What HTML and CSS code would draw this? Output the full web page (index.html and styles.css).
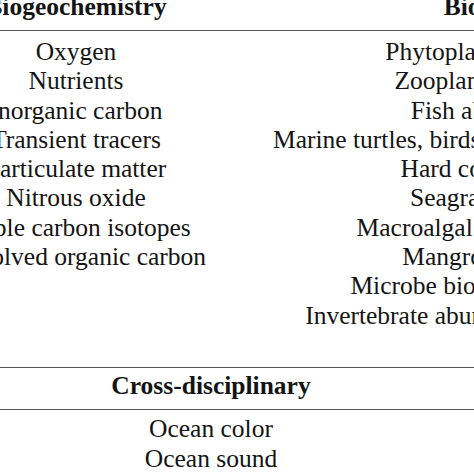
FILE: index.html
```html
<!DOCTYPE html>
<html>
<head>
<meta charset="utf-8">
<link rel="stylesheet" href="styles.css">
</head>
<body>
<div class="table">
  <div class="cols head">
    <div class="cell">Physics</div>
    <div class="cell">Biogeochemistry</div>
    <div class="cell">Biology and Ecosystems</div>
  </div>
  <div class="rule"></div>
  <div class="cols body">
    <div class="col">
      <div>Sea state</div>
      <div>Ocean surface stress</div>
      <div>Sea ice</div>
      <div>Sea surface height</div>
      <div>Sea surface temperature</div>
      <div>Subsurface temperature</div>
      <div>Surface currents</div>
      <div>Subsurface currents</div>
      <div>Sea surface salinity</div>
      <div>Subsurface salinity</div>
      <div>Ocean surface heat flux</div>
    </div>
    <div class="col">
      <div>Oxygen</div>
      <div>Nutrients</div>
      <div>Inorganic carbon</div>
      <div>Transient tracers</div>
      <div>Particulate matter</div>
      <div>Nitrous oxide</div>
      <div>Stable carbon isotopes</div>
      <div>Dissolved organic carbon</div>
    </div>
    <div class="col">
      <div>Phytoplankton biomass and diversity</div>
      <div>Zooplankton biomass and diversity</div>
      <div>Fish abundance and distribution</div>
      <div>Marine turtles, birds, mammals abundance and distribution</div>
      <div>Hard coral cover and composition</div>
      <div>Seagrass cover and composition</div>
      <div>Macroalgal canopy cover and composition</div>
      <div>Mangrove cover and composition</div>
      <div>Microbe biomass and diversity (*emerging)</div>
      <div>Invertebrate abundance and distribution (*emerging)</div>
    </div>
  </div>
  <div class="rule"></div>
  <div class="section-head">Cross-disciplinary</div>
  <div class="rule"></div>
  <div class="section-body">
    <div>Ocean color</div>
    <div>Ocean sound</div>
  </div>
</div>
</body>
</html>
```
FILE: styles.css
```css
html, body {
  margin: 0;
  padding: 0;
  background: #ffffff;
  overflow: hidden;
}
body {
  font-family: "Liberation Serif", "Times New Roman", serif;
  font-size: 25.5px;
  line-height: 29.3px;
  color: #141414;
}
.table {
  width: 1340px;
  margin: -8.3px 0 0 -459px;
}
.cols {
  display: grid;
  grid-template-columns: 344px 382px 614px;
  text-align: center;
  white-space: nowrap;
}
.head {
  font-weight: bold;
  padding-bottom: 9px;
}
.rule {
  height: 0;
  border-top: 1.5px solid #555555;
}
.body {
  padding-top: 6px;
  padding-bottom: 8px;
}
.section-head {
  font-weight: bold;
  text-align: center;
  padding-top: 3.2px;
  padding-bottom: 8px;
}
.section-body {
  text-align: center;
  padding-top: 4.6px;
}
```
